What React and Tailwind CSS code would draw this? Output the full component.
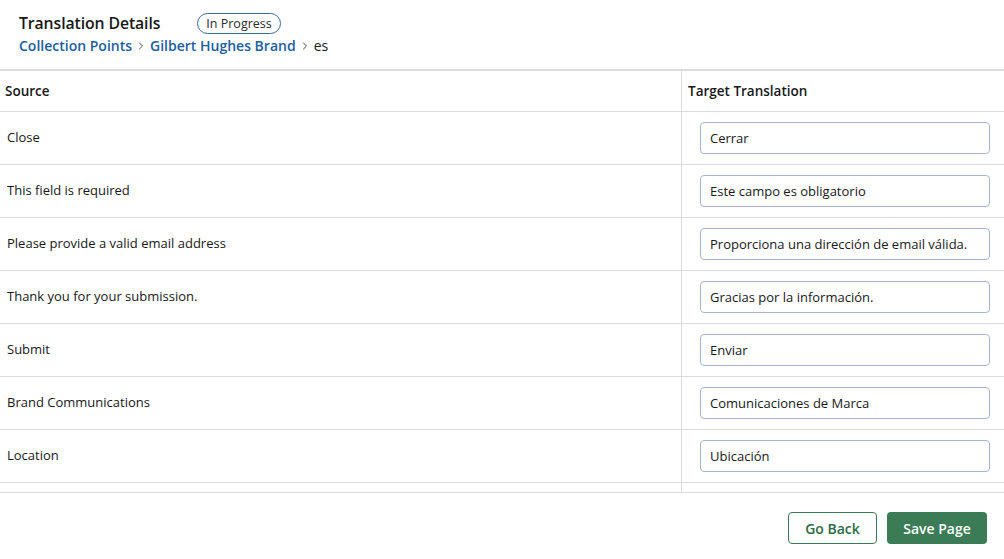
import { ChevronRight } from 'lucide-react';

const rows = [
    { source: 'Close', target: 'Cerrar' },
    { source: 'This field is required', target: 'Este campo es obligatorio' },
    { source: 'Please provide a valid email address', target: 'Proporciona una dirección de email válida.' },
    { source: 'Thank you for your submission.', target: 'Gracias por la información.' },
    { source: 'Submit', target: 'Enviar' },
    { source: 'Brand Communications', target: 'Comunicaciones de Marca' },
    { source: 'Location', target: 'Ubicación' },
    { source: 'Address', target: 'Dirección' },
];

const App = () => {
    return (
        <div className="w-[1004px] h-[559px] flex flex-col bg-white text-[#181818] font-['Open_Sans',sans-serif] overflow-hidden">
            <div className="h-[71px] shrink-0 border-b-2 border-[#dddbda] pl-[19px] pt-[11px]">
                <div className="flex items-center">
                    <h1 className="text-[15.8px] font-semibold leading-[24px] tracking-[-0.1px]">Translation Details</h1>
                    <span className="ml-[37px] h-[21px] px-[8px] rounded-full border border-[#3a6b96] text-[12.5px] leading-[19px] text-[#2b2b2b]">
                        In Progress
                    </span>
                </div>
                <div className="flex items-center text-[14px] leading-[22px]">
                    <a className="text-[#1b5ea0] font-semibold">Collection Points</a>
                    <ChevronRight className="mx-[3px] w-[12px] h-[12px] text-[#444]" strokeWidth={2} />
                    <a className="text-[#1b5ea0] font-semibold">Gilbert Hughes Brand</a>
                    <ChevronRight className="mx-[3px] w-[12px] h-[12px] text-[#444]" strokeWidth={2} />
                    <span>es</span>
                </div>
            </div>
            <div className="h-[422px] shrink-0 overflow-hidden border-b border-[#dddbda]">
                <div className="grid grid-cols-[682px_1fr]">
                    <div className="h-[41px] flex items-center pl-[5px] border-b border-r border-[#dddbda] text-[13.5px] font-semibold">
                        Source
                    </div>
                    <div className="h-[41px] flex items-center pl-[6px] border-b border-[#dddbda] text-[13.5px] font-semibold">
                        Target Translation
                    </div>
                    {rows.map((row, index) => (
                        <div key={index} className="contents">
                            <div className="h-[53px] flex items-center pl-[7px] border-b border-r border-[#dddbda] text-[13px]">
                                {row.source}
                            </div>
                            <div className="h-[53px] flex items-center pl-[18px] pr-[14px] border-b border-[#dddbda]">
                                <input
                                    className="w-full h-[32px] rounded-[4px] border border-[#a3b6cc] px-[9px] text-[13px] text-[#181818] outline-none"
                                    defaultValue={row.target}
                                />
                            </div>
                        </div>
                    ))}
                </div>
            </div>
            <div className="flex-1 flex justify-end items-start pt-[19px] pr-[17px] gap-[10px]">
                <button className="h-[32px] w-[89px] rounded-[4px] border border-[#3b7b55] text-[#2e6b47] text-[14px] font-semibold bg-white">
                    Go Back
                </button>
                <button className="h-[32px] w-[100px] rounded-[4px] bg-[#3b7b55] text-white text-[14px] font-semibold">
                    Save Page
                </button>
            </div>
        </div>
    );
};

export default App;
